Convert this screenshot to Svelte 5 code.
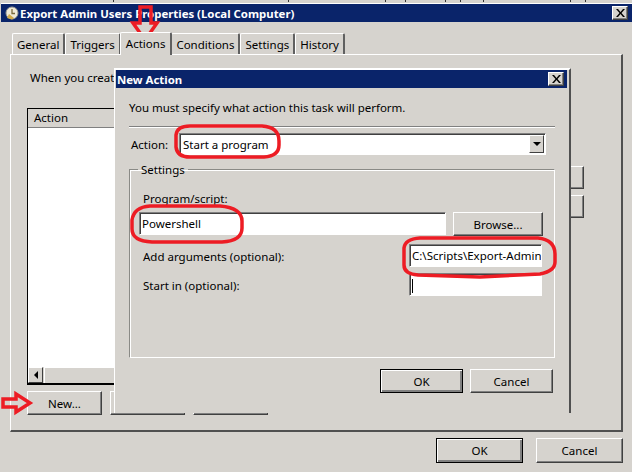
<script>
  const tabs = ['General', 'Triggers', 'Actions', 'Conditions', 'Settings', 'History'];
  const activeTab = 'Actions';
  // little marks left from whatever sat behind the window
  const ticks = [113, 288, 385, 405, 445, 460, 483, 570, 585];
</script>

<div class="desktop">
  <div class="window">
    <div class="strip">
      {#each ticks as x}
        <i class="tick" style="left: {x}px"></i>
      {/each}
    </div>
    <div class="titlebar">
      <svg class="clock" viewBox="0 0 14 14" width="14" height="14">
        <circle cx="7" cy="7" r="6" fill="#efe9d6" stroke="#9a9a94" />
        <path d="M7 3v4.500h3" fill="none" stroke="#7a6a3a" stroke-width="1.300" />
        <path d="M2 12l2-4 5 4-2 1.500z" fill="#d2ab4a" />
      </svg>
      <span class="title-text">Export Admin Users Properties (Local Computer)</span>
      <button class="close" aria-label="Close">
        <svg viewBox="0 0 9 8" width="9" height="8"><path d="M0 0l2 0 2.500 3 2.500-3 2 0-3.500 4 3.500 4-2 0-2.500-3-2.500 3-2 0 3.500-4z" /></svg>
      </button>
    </div>

    <div class="tabs">
      {#each tabs as tab}
        <div class="tab" class:active={tab === activeTab}>{tab}</div>
      {/each}
    </div>

    <div class="panel">
      <p class="intro">When you creat</p>
      <div class="list-row">
        <div class="list">
          <div class="list-head">Action</div>
          <div class="list-body"></div>
          <div class="hscroll">
            <button class="scroll-btn" aria-label="Left"><span class="left-tri"></span></button>
            <div class="scroll-thumb"></div>
          </div>
        </div>
        <div class="side-btns">
          <button class="btn side" aria-label="Up"></button>
          <button class="btn side" aria-label="Down"></button>
        </div>
      </div>
      <div class="panel-btns">
        <button class="btn small">New...</button>
        <button class="btn small" aria-label="Edit"></button>
        <button class="btn small" aria-label="Delete"></button>
      </div>
    </div>

    <div class="footer">
      <button class="btn wide default">OK</button>
      <button class="btn wide">Cancel</button>
    </div>
  </div>

  <div class="dialog">
    <div class="titlebar inner">
      <span class="title-text">New Action</span>
      <button class="close" aria-label="Close">
        <svg viewBox="0 0 9 8" width="9" height="8"><path d="M0 0l2 0 2.500 3 2.500-3 2 0-3.500 4 3.500 4-2 0-2.500-3-2.500 3-2 0 3.500-4z" /></svg>
      </button>
    </div>
    <div class="dialog-body">
      <p class="must">You must specify what action this task will perform.</p>
      <div class="rule"></div>
      <div class="action-row">
        <span class="action-label">Action:</span>
        <div class="combo">
          <span>Start a program</span>
          <button class="combo-arrow" aria-label="Open"><span class="down-tri"></span></button>
        </div>
      </div>
      <fieldset class="settings">
        <legend>Settings</legend>
        <div class="field-label">Program/script:</div>
        <div class="program-row">
          <div class="input program">Powershell</div>
          <button class="btn browse">Browse...</button>
        </div>
        <div class="arg-row">
          <span>Add arguments (optional):</span>
          <div class="input arg">C:\Scripts\Export-Admin</div>
        </div>
        <div class="arg-row start">
          <span>Start in (optional):</span>
          <div class="input arg"><i class="caret"></i></div>
        </div>
      </fieldset>
      <div class="dialog-btns">
        <button class="btn mid default">OK</button>
        <button class="btn mid">Cancel</button>
      </div>
    </div>
  </div>

  <!-- hand drawn red markup on top of the screenshot -->
  <svg class="markup" viewBox="0 0 632 472" width="632" height="472">
    <path d="M140 7h11v16h6l-12 17-12-17h7z" />
    <path d="M3 399h13v-5l14 9-14 9v-5h-13z" />
    <path d="M190 126h72q17 1 17 15v4q0 11-15 12h-74q-13 0-14-10v-12q1-9 14-9z" />
    <path d="M150 206h70q22 2 22 15v7q0 13-20 14h-70q-20-1-20-13v-9q2-13 18-14z" />
    <path d="M420 238h118q17 2 17 16v8q0 9-15 12l-60 3-62-2q-14-1-14-10v-17q1-9 16-10z" />
  </svg>
</div>

<style>
  :global(body) {
    margin: 0;
    background: #d6d3ce;
  }

  .desktop {
    position: relative;
    width: 632px;
    height: 472px;
    overflow: hidden;
    background: #d6d3ce;
    font-family: "Noto Sans", "DejaVu Sans", sans-serif;
    font-size: 11.5px;
    color: #000;
  }

  .window {
    height: 472px;
    padding-left: 1px;
    box-sizing: border-box;
  }

  .strip {
    height: 3px;
    border-bottom: 1px solid #fff;
  }

  .tick {
    position: absolute;
    top: 0;
    width: 1px;
    height: 2px;
    background: #333;
  }

  .titlebar {
    display: flex;
    align-items: center;
    height: 18px;
    background: #0a246a;
    color: #fff;
    font-weight: 700;
    font-size: 11.4px;
    padding: 0 4px;
  }

  .clock {
    margin-right: 1px;
  }

  .title-text {
    flex: 1;
    white-space: nowrap;
  }

  .close {
    width: 16px;
    height: 14px;
    padding: 0;
    display: flex;
    align-items: center;
    justify-content: center;
    background: #d6d3ce;
    border: 1px solid;
    border-color: #fff #404040 #404040 #fff;
    box-shadow: inset -1px -1px 0 #808080;
  }

  .tabs {
    display: flex;
    height: 32px;
    align-items: flex-end;
    padding-left: 11px;
    box-sizing: border-box;
  }

  .tab {
    height: 21px;
    line-height: 21px;
    padding: 0 4px;
    border: 1px solid #fff;
    border-bottom: 0;
    border-right: 2px solid #606060;
    border-radius: 2px 2px 0 0;
    box-sizing: border-box;
  }

  .tab.active {
    height: 23px;
    margin: 0 -1px -1px -1px;
    padding: 0 5px;
    position: relative;
    background: #d6d3ce;
    z-index: 1;
  }

  .panel {
    margin-left: 9px;
    margin-right: 9px;
    height: 378px;
    box-sizing: border-box;
    border: 1px solid #fff;
    border-right: 2px solid #505050;
    border-bottom: 2px solid #505050;
    padding: 15px 16px 0 16px;
  }

  .intro {
    margin: 0 0 0 3px;
    height: 38px;
    white-space: nowrap;
  }

  .list-row {
    display: flex;
    gap: 10px;
  }

  .list {
    width: 530px;
    height: 277px;
    display: flex;
    flex-direction: column;
    box-sizing: border-box;
    background: #fff;
    border: 1px solid #000;
    border-width: 1px 0 2px 1px;
  }

  .list-head {
    height: 18px;
    line-height: 18px;
    padding-left: 6px;
    background: #d6d3ce;
    border-bottom: 1px solid #808080;
  }

  .list-body {
    flex: 1;
  }

  .hscroll {
    display: flex;
    height: 16px;
    background: #d6d3ce;
  }

  .scroll-btn {
    width: 15px;
    padding: 0;
    background: #d6d3ce;
    border: 1px solid;
    border-color: #fff #404040 #404040 #fff;
    display: flex;
    align-items: center;
    justify-content: center;
  }

  .left-tri {
    border: 4px solid transparent;
    border-left: 0;
    border-right: 4px solid #000;
  }

  .scroll-thumb {
    flex: 1;
    border-top: 1px solid #fff;
    border-left: 1px solid #fff;
    margin-left: 1px;
  }

  .side-btns {
    display: flex;
    flex-direction: column;
    gap: 6px;
    padding-top: 58px;
  }

  .btn {
    background: #d6d3ce;
    border: 1px solid;
    border-color: #fff #404040 #404040 #fff;
    box-shadow: inset -1px -1px 0 #808080;
    padding: 0;
    font: inherit;
    color: #000;
    box-sizing: border-box;
  }

  .btn.default {
    border-color: #000;
    box-shadow: inset 1px 1px 0 #fff, inset -2px -2px 0 #808080;
  }

  .side {
    width: 17px;
    height: 23px;
  }

  .panel-btns {
    display: flex;
    gap: 8px;
    margin-top: 6px;
  }

  .small {
    width: 75px;
    height: 24px;
  }

  .footer {
    display: flex;
    justify-content: flex-end;
    gap: 13px;
    padding: 6px 9px 0 0;
  }

  .wide {
    width: 87px;
    height: 25px;
  }

  .dialog {
    position: absolute;
    left: 114px;
    top: 68px;
    width: 457px;
    height: 345px;
    box-sizing: border-box;
    background: #d6d3ce;
    border-left: 1px solid #fff;
    border-top: 2px solid #fff;
    border-right: 2px solid #505050;
    padding: 0 1px 0 1px;
  }

  .titlebar.inner {
    padding: 0 3px 0 1px;
    margin-right: 1px;
  }

  .dialog-body {
    padding: 0 13px;
  }

  .must {
    margin: 0;
    padding: 12px 0 0 0;
    height: 38px;
    box-sizing: border-box;
  }

  .rule {
    height: 1px;
    background: #808080;
    border-bottom: 1px solid #fff;
  }

  .action-row {
    display: flex;
    align-items: center;
    margin-top: 5px;
    padding-left: 2px;
  }

  .action-label {
    width: 48px;
  }

  .combo {
    width: 367px;
    height: 22px;
    display: flex;
    align-items: center;
    justify-content: space-between;
    box-sizing: border-box;
    background: #fff;
    border: 1px solid;
    border-color: #808080 #fff #fff #808080;
    box-shadow: inset 1px 1px 0 #404040;
    padding-left: 3px;
  }

  .combo-arrow {
    width: 15px;
    height: 18px;
    margin-right: 1px;
    padding: 0;
    background: #d6d3ce;
    border: 1px solid;
    border-color: #fff #404040 #404040 #fff;
    display: flex;
    align-items: center;
    justify-content: center;
  }

  .down-tri {
    border: 4px solid transparent;
    border-bottom: 0;
    border-top: 4px solid #000;
  }

  .settings {
    margin: 7px 0 0;
    padding: 14px 0 0 9px;
    height: 196px;
    box-sizing: border-box;
    border: 1px solid #fff;
    border-top-color: #8a8a86;
    border-left-color: #8a8a86;
    box-shadow: inset 1px 1px 0 #fff;
  }

  legend {
    margin-left: -1px;
    padding: 0 3px;
  }

  .field-label {
    padding-left: 4px;
    height: 21px;
  }

  .input {
    height: 23px;
    line-height: 21px;
    box-sizing: border-box;
    background: #fff;
    border: 1px solid;
    border-color: #808080 #fff #fff #808080;
    box-shadow: inset 1px 1px 0 #404040;
    padding-left: 2px;
    white-space: nowrap;
    overflow: hidden;
  }

  .program-row {
    display: flex;
    gap: 7px;
  }

  .program {
    width: 307px;
  }

  .browse {
    width: 90px;
    height: 24px;
  }

  .arg-row {
    display: flex;
    align-items: center;
    justify-content: space-between;
    width: 403px;
    padding-left: 4px;
    box-sizing: border-box;
    margin-top: 8px;
  }

  .arg-row span {
    margin-top: 1px;
  }

  .arg-row.start {
    margin-top: 6px;
  }

  .arg {
    width: 133px;
  }

  .caret {
    display: inline-block;
    width: 1px;
    height: 14px;
    background: #000;
    vertical-align: middle;
  }

  .dialog-btns {
    display: flex;
    justify-content: flex-end;
    gap: 7px;
    padding: 11px 2px 0 0;
  }

  .mid {
    width: 83px;
    height: 24px;
  }

  .markup {
    position: absolute;
    left: 0;
    top: 0;
    pointer-events: none;
  }

  .markup path {
    fill: none;
    stroke: #ed1c24;
    stroke-width: 3.5;
  }
</style>
